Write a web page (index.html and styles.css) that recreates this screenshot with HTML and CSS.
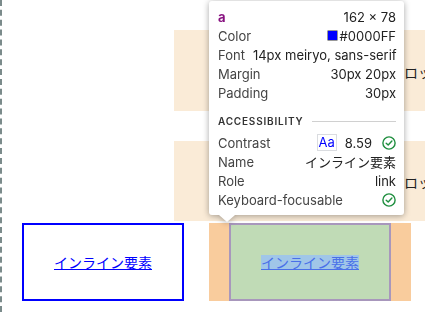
FILE: index.html
```html
<!DOCTYPE html>
<html lang="ja">
<head>
<meta charset="utf-8">
<title>Inline element</title>
<link rel="stylesheet" href="styles.css">
</head>
<body>
<div class="page">
  <div class="block first">ブロック要素</div>
  <div class="block">ブロック要素</div>
  <div class="inline-row">
    <a class="inl" href="#">インライン要素</a>
    <span class="margin-hl"><a class="inl hovered" href="#">インライン要素</a></span>
  </div>
</div>

<div class="tooltip">
  <div class="row head"><span class="tag">a</span><span class="val">162 × 78</span></div>
  <div class="row"><span class="lbl">Color</span><span class="val"><i class="swatch"></i>#0000FF</span></div>
  <div class="row"><span class="lbl">Font</span><span class="val">14px meiryo, sans-serif</span></div>
  <div class="row"><span class="lbl">Margin</span><span class="val">30px 20px</span></div>
  <div class="row"><span class="lbl">Padding</span><span class="val">30px</span></div>
  <div class="section"><span>ACCESSIBILITY</span><i class="rule"></i></div>
  <div class="row"><span class="lbl">Contrast</span><span class="val"><span class="aa">Aa</span><span class="ratio">8.59</span><svg class="ok" width="14" height="14" viewBox="0 0 14 14"><circle cx="7" cy="7" r="6.1" fill="none" stroke="#1e8e3e" stroke-width="1.4"/><path d="M4.2 7.2 L6.2 9.1 L9.9 5.1" fill="none" stroke="#1e8e3e" stroke-width="1.4" stroke-linecap="round" stroke-linejoin="round"/></svg></span></div>
  <div class="row"><span class="lbl">Name</span><span class="val cjk">インライン要素</span></div>
  <div class="row"><span class="lbl">Role</span><span class="val">link</span></div>
  <div class="row"><span class="lbl">Keyboard-focusable</span><span class="val"><svg class="ok" width="14" height="14" viewBox="0 0 14 14"><circle cx="7" cy="7" r="6.1" fill="none" stroke="#1e8e3e" stroke-width="1.4"/><path d="M4.2 7.2 L6.2 9.1 L9.9 5.1" fill="none" stroke="#1e8e3e" stroke-width="1.4" stroke-linecap="round" stroke-linejoin="round"/></svg></span></div>
</div>
</body>
</html>
```
FILE: styles.css
```css
html, body {
  margin: 0;
  height: 100%;
  overflow: hidden;
  background: #fff;
}
body {
  position: relative;
  font-family: "Noto Sans CJK JP", sans-serif;
}
.page {
  box-sizing: border-box;
  height: 312px;
  padding-top: 30px;
  border-left: 2px dashed #7b8b8b;
}
.block {
  box-sizing: border-box;
  display: flex;
  align-items: center;
  margin-left: 172px;
  width: 420px;
  height: 80px;
  padding-left: 216px;
  padding-top: 2px;
  background: #faebd7;
  color: #222;
  font-size: 14px;
  white-space: nowrap;
}
.block.first { height: 81px; }
.block + .block { margin-top: 30px; }

.inline-row {
  display: flex;
  align-items: flex-start;
  gap: 5px;
  margin-top: 2px;
}
.inl {
  display: block;
  margin: 0 20px;
  padding: 30px;
  height: 14px;
  border: 2px solid #0000ff;
  font-size: 14px;
  line-height: 14px;
  color: #0000ff;
  text-decoration: underline;
  white-space: nowrap;
}
.margin-hl {
  display: block;
  padding: 0 20px;
  background: #f9cc9d;
}
.inl.hovered {
  margin: 0;
  border-color: #a897bc;
  background: linear-gradient(#a0c6e8, #a0c6e8) content-box, #c0dbb6;
  color: #4970e8;
}

.tooltip {
  position: absolute;
  left: 209px;
  top: 1px;
  box-sizing: border-box;
  width: 195px;
  padding: 6px 8px 6px 9px;
  background: #fff;
  border-radius: 3px;
  filter: drop-shadow(0 1px 3px rgba(0, 0, 0, 0.35));
  font-family: Inter, "Noto Sans CJK JP", sans-serif;
  font-size: 13px;
  color: #303030;
}
.tooltip::after {
  content: "";
  position: absolute;
  left: 10px;
  top: 100%;
  border-left: 8px solid transparent;
  border-right: 8px solid transparent;
  border-top: 7px solid #fff;
}
.row {
  display: flex;
  justify-content: space-between;
  align-items: center;
  gap: 8px;
  height: 19px;
  white-space: nowrap;
}
.tag {
  color: #881280;
  font-weight: 700;
}
.val {
  display: flex;
  align-items: center;
  color: #222;
}
.lbl { color: #444; }
.swatch {
  display: inline-block;
  width: 9px;
  height: 9px;
  margin-right: 3px;
  background: #0000ff;
  box-shadow: 0 0 0 0.5px #333;
}
.section {
  display: flex;
  align-items: center;
  gap: 8px;
  height: 14px;
  margin: 12px 0 5px;
  font-size: 10px;
  font-weight: 600;
  letter-spacing: 0.8px;
  color: #333;
}
.rule {
  flex: 1;
  height: 1px;
  background: #d0d0d0;
}
.aa {
  box-sizing: border-box;
  width: 20px;
  height: 17px;
  margin-right: 8px;
  border: 1px solid #dadce0;
  color: #0000ff;
  text-align: center;
  line-height: 15px;
}
.ratio { margin-right: 10px; }
.cjk { font-family: "Noto Sans CJK JP", sans-serif; }
```
